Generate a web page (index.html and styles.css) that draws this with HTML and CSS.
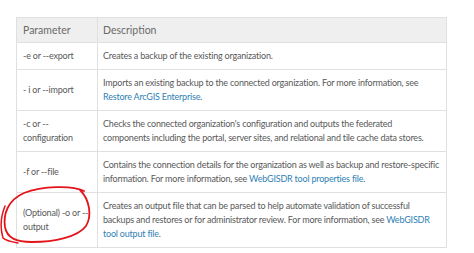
FILE: index.html
```html
<!DOCTYPE html>
<html lang="en">
<head>
    <meta charset="UTF-8">
    <title>WebGISDR parameters</title>
    <link rel="stylesheet" href="styles.css">
</head>
<body>
    <div class="wrap">
        <table class="params">
            <thead>
                <tr>
                    <th class="col-param">Parameter</th>
                    <th>Description</th>
                </tr>
            </thead>
            <tbody>
                <tr>
                    <td>-e or --export</td>
                    <td>Creates a backup of the existing organization.</td>
                </tr>
                <tr>
                    <td>- i or --import</td>
                    <td>Imports an existing backup to the connected organization. For more information, see <a href="#">Restore ArcGIS Enterprise</a>.</td>
                </tr>
                <tr>
                    <td>-c or --configuration</td>
                    <td>Checks the connected organization's configuration and outputs the federated components including the portal, server sites, and relational and tile cache data stores.</td>
                </tr>
                <tr>
                    <td>-f or --file</td>
                    <td>Contains the connection details for the organization as well as backup and restore-specific information. For more information, see <a href="#">WebGISDR tool properties file</a>.</td>
                </tr>
                <tr>
                    <td>(Optional) -o or --output</td>
                    <td>Creates an output file that can be parsed to help automate validation of successful backups and restores or for administrator review. For more information, see <a href="#">WebGISDR tool output file</a>.</td>
                </tr>
            </tbody>
        </table>

        <!-- hand drawn mark around the last parameter -->
        <svg class="scribble" width="100" height="70" viewBox="0 0 100 70">
            <path d="M84 11 C72 5, 42 6, 24 13 C8 20, 3 34, 5 47 C7 58, 16 62, 32 62 C54 62, 78 57, 86 46 C92 36, 90 20, 80 10"
                  fill="none" stroke="#e3141b" stroke-width="1.8" stroke-linecap="round"/>
            <path d="M5 26 C1 36, 0 48, 3 58 C6 61, 12 62, 18 63" fill="none" stroke="#e3141b" stroke-width="1.5" stroke-linecap="round"/>
        </svg>
    </div>
</body>
</html>
```

FILE: styles.css
```css
body {
    margin: 0;
    background-color: #ffffff;
    font-family: 'Lato', sans-serif;
}

.wrap {
    position: relative;
    padding: 17px 0 0 16px;
}

.params {
    width: 431px;
    border-collapse: collapse;
    font-size: 9px;
    letter-spacing: -0.2px;
    line-height: 14px;
    color: #595959;
}

.params th,
.params td {
    border: 1px solid #e0e0e0;
    padding: 6px 6px 6px 5px;
    text-align: left;
    vertical-align: middle;
}

.params th {
    background-color: #efefef;
    font-weight: normal;
    color: #6a6a6a;
    font-size: 10.5px;
    letter-spacing: 0;
    padding: 5px;
}

.col-param {
    width: 69px;
}

.params td:first-child,
.params th:first-child {
    padding-left: 6px;
}

.params a {
    color: #2f7fb5;
    text-decoration: none;
}

.scribble {
    position: absolute;
    left: 0;
    top: 180px;
}
```
